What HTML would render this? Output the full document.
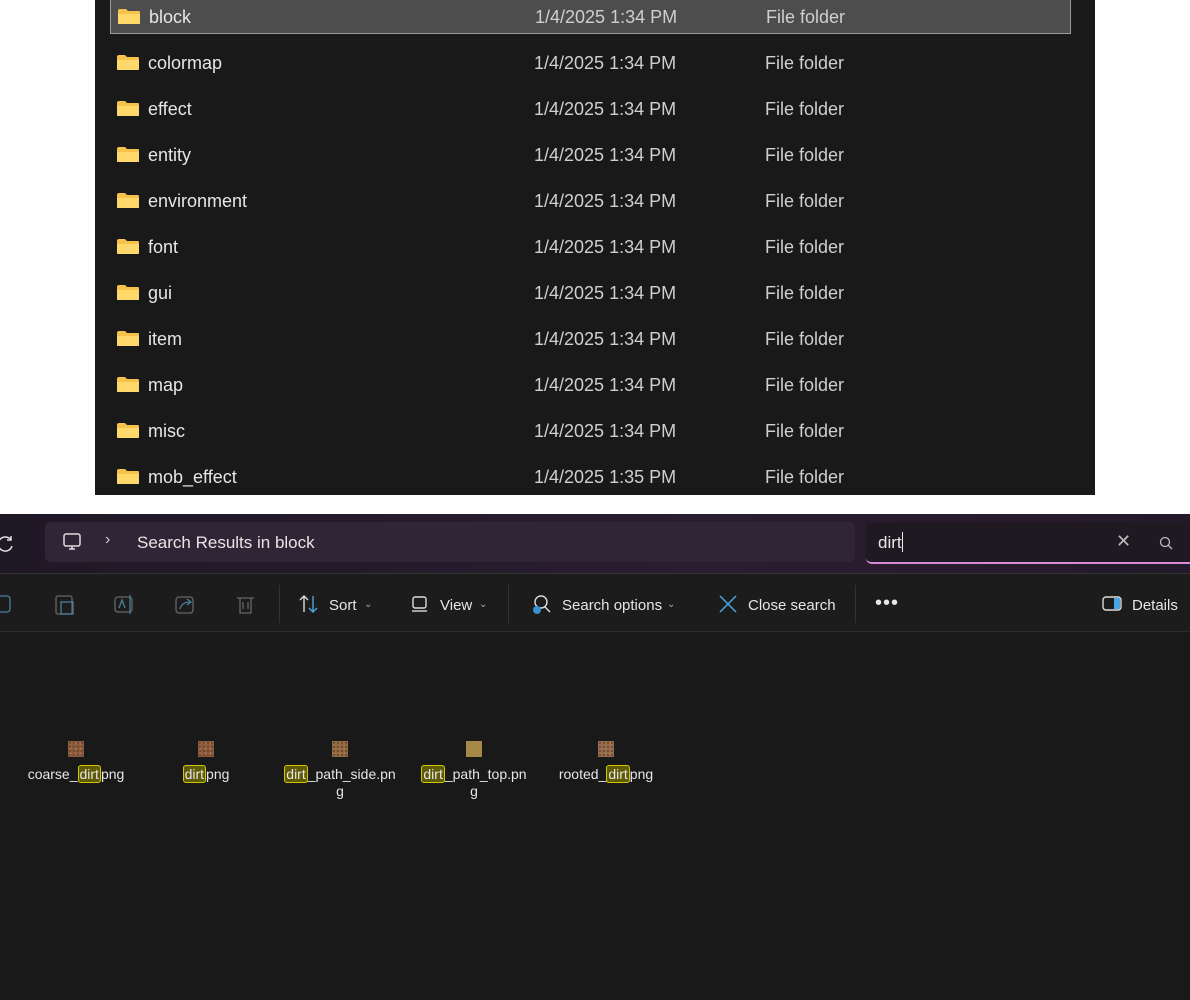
<!DOCTYPE html>
<html><head><meta charset="utf-8"><style>
*{margin:0;padding:0;box-sizing:border-box}
body{width:1190px;height:1000px;background:#fff;position:relative;overflow:hidden;font-family:"Liberation Sans",sans-serif;color:#e6e6e6}
#top{position:absolute;left:95px;top:0;width:1000px;height:495px;background:#191919}
.row{position:absolute;left:15px;width:961px;height:36px;font-size:18px}
.row .ic{position:absolute;left:6px;top:10px;width:24px;height:17px}
.row .n{position:absolute;left:38px;top:9px}
.row .d{position:absolute;left:424px;top:9px;color:#cfcfcf}
.row .t{position:absolute;left:655px;top:9px;color:#cfcfcf}
.sel{background:#4d4d4d;border:1px solid #9a9a9a;border-top:none}
#win{position:absolute;left:0;top:514px;width:1190px;height:486px;background:#191919}
#bar{position:absolute;left:0;top:0;width:1190px;height:59px;background:linear-gradient(90deg,#1f1825,#2a1d30 60%,#24192a)}
#addr{position:absolute;left:45px;top:8px;width:810px;height:40px;background:#302536;border-radius:6px}
#srch{position:absolute;left:866px;top:8px;width:330px;height:42px;background:#1f1a22;border-radius:6px;border-bottom:2px solid #d889d8}
#tb{position:absolute;left:0;top:59px;width:1190px;height:59px;background:#1c1c1c;border-top:1px solid #333;border-bottom:1px solid #2c2c2c;font-size:15px}
.tx{position:absolute;top:23px}
.sep{position:absolute;top:11px;width:1px;height:38px;background:#333}
.f{position:absolute;top:227px;text-align:center;font-size:14px;line-height:17px;width:120px}
.f .sq{width:16px;height:16px;margin:0 auto 9px;background:#8a5a3c;background-image:radial-gradient(#6b432b 30%,transparent 31%),radial-gradient(#a97454 30%,transparent 31%);background-size:4px 4px,5px 5px}
.h{background:#5f5a07;border:1px solid #d0c700;border-radius:3px;padding:0 1px}
</style></head><body>
<div id="top">
<svg width="0" height="0" style="position:absolute"><defs><g id="fd"><path d="M1 3 Q1 1 3 1 H9 L11 3 H22 Q23 3 23 5 V15 Q23 16 22 16 H2 Q1 16 1 15Z" fill="#f5c34c"/><path d="M1 6 H23 V15 Q23 16 22 16 H2 Q1 16 1 15Z" fill="#ffd86a"/></g></defs></svg>
<div class="row sel" style="top:-2px;height:36px"><svg class="ic" viewBox="0 0 24 17"><use href="#fd"/></svg><span class="n">block</span><span class="d">1/4/2025 1:34 PM</span><span class="t">File folder</span></div>
<div class="row" style="top:44px"><svg class="ic" viewBox="0 0 24 17"><use href="#fd"/></svg><span class="n">colormap</span><span class="d">1/4/2025 1:34 PM</span><span class="t">File folder</span></div>
<div class="row" style="top:90px"><svg class="ic" viewBox="0 0 24 17"><use href="#fd"/></svg><span class="n">effect</span><span class="d">1/4/2025 1:34 PM</span><span class="t">File folder</span></div>
<div class="row" style="top:136px"><svg class="ic" viewBox="0 0 24 17"><use href="#fd"/></svg><span class="n">entity</span><span class="d">1/4/2025 1:34 PM</span><span class="t">File folder</span></div>
<div class="row" style="top:182px"><svg class="ic" viewBox="0 0 24 17"><use href="#fd"/></svg><span class="n">environment</span><span class="d">1/4/2025 1:34 PM</span><span class="t">File folder</span></div>
<div class="row" style="top:228px"><svg class="ic" viewBox="0 0 24 17"><use href="#fd"/></svg><span class="n">font</span><span class="d">1/4/2025 1:34 PM</span><span class="t">File folder</span></div>
<div class="row" style="top:274px"><svg class="ic" viewBox="0 0 24 17"><use href="#fd"/></svg><span class="n">gui</span><span class="d">1/4/2025 1:34 PM</span><span class="t">File folder</span></div>
<div class="row" style="top:320px"><svg class="ic" viewBox="0 0 24 17"><use href="#fd"/></svg><span class="n">item</span><span class="d">1/4/2025 1:34 PM</span><span class="t">File folder</span></div>
<div class="row" style="top:366px"><svg class="ic" viewBox="0 0 24 17"><use href="#fd"/></svg><span class="n">map</span><span class="d">1/4/2025 1:34 PM</span><span class="t">File folder</span></div>
<div class="row" style="top:412px"><svg class="ic" viewBox="0 0 24 17"><use href="#fd"/></svg><span class="n">misc</span><span class="d">1/4/2025 1:34 PM</span><span class="t">File folder</span></div>
<div class="row" style="top:458px"><svg class="ic" viewBox="0 0 24 17"><use href="#fd"/></svg><span class="n">mob_effect</span><span class="d">1/4/2025 1:35 PM</span><span class="t">File folder</span></div>
</div>
<div id="win">
<div id="bar">
<svg style="position:absolute;left:-4px;top:20px" width="20" height="20" viewBox="0 0 20 20"><path d="M15 6 A7 7 0 1 0 16 12" fill="none" stroke="#ddd" stroke-width="1.5"/><path d="M15 2 V6 H11" fill="none" stroke="#ddd" stroke-width="1.5"/></svg>
<div id="addr">
<svg style="position:absolute;left:17px;top:10px" width="20" height="20" viewBox="0 0 20 20"><rect x="2" y="2" width="16" height="12" rx="2" fill="none" stroke="#ddd" stroke-width="1.5"/><path d="M7 17 H13 M10 14 V17" stroke="#ddd" stroke-width="1.5"/></svg>
<span style="position:absolute;left:60px;top:9px;font-size:16px;color:#ccc">›</span>
<span style="position:absolute;left:92px;top:11px;font-size:17px">Search Results in block</span>
</div>
<div id="srch"><span style="position:absolute;left:12px;top:10px;font-size:17px">dirt<span style="display:inline-block;width:1px;height:20px;background:#eee;vertical-align:-4px"></span></span>
<span style="position:absolute;left:250px;top:9px;font-size:18px;color:#bbb">✕</span>
<svg style="position:absolute;left:293px;top:14px" width="14" height="14" viewBox="0 0 14 14"><circle cx="6" cy="6" r="4.5" fill="none" stroke="#bbb" stroke-width="1.3"/><path d="M9 9 L13 13" stroke="#bbb" stroke-width="1.3"/></svg></div>
</div>
<div id="tb">
<svg style="position:absolute;left:0;top:19px" width="270" height="22" viewBox="0 0 270 22" fill="none" stroke-width="1.3"><rect x="-4" y="3" width="14" height="16" rx="3" stroke="#4a7f9a"/><rect x="56" y="3" width="16" height="18" rx="2" stroke="#666"/><rect x="61" y="9" width="12" height="12" stroke="#4a7f9a"/><rect x="115" y="4" width="17" height="15" rx="3" stroke="#666"/><path d="M119 15 L122 7 L125 15 M130 2 V21" stroke="#4a7f9a"/><rect x="176" y="4" width="17" height="16" rx="3" stroke="#666"/><path d="M180 16 Q182 9 190 9 M187 6 L191 9 L187 12" stroke="#4a7f9a"/><path d="M237 5 H254 M240 5 V20 H251 V5 M243 9 V16 M248 9 V16" stroke="#666"/></svg>
<div class="sep" style="left:279px"></div>
<svg style="position:absolute;left:298px;top:20px" width="22" height="20" viewBox="0 0 22 20" fill="none" stroke-width="1.4"><path d="M6 18 V2 M2 6 L6 2 L10 6" stroke="#ddd"/><path d="M15 2 V18 M11 14 L15 18 L19 14" stroke="#4aa6e0"/></svg>
<span class="tx" style="left:329px">Sort</span><span class="tx" style="left:364px;font-size:10px;top:25px;color:#aaa">⌄</span>
<svg style="position:absolute;left:410px;top:21px" width="20" height="18" viewBox="0 0 20 18" fill="none" stroke="#ddd" stroke-width="1.4"><rect x="3" y="2" width="13" height="11" rx="2"/><path d="M2 16 H17"/></svg>
<span class="tx" style="left:440px">View</span><span class="tx" style="left:479px;font-size:10px;top:25px;color:#aaa">⌄</span>
<div class="sep" style="left:508px"></div>
<svg style="position:absolute;left:530px;top:20px" width="22" height="22" viewBox="0 0 22 22" fill="none"><circle cx="11" cy="8" r="6" stroke="#ddd" stroke-width="1.4"/><path d="M15 13 L20 18" stroke="#ddd" stroke-width="1.4"/><circle cx="7" cy="16" r="4" fill="#3a8fd0"/></svg>
<span class="tx" style="left:562px">Search options</span><span class="tx" style="left:667px;font-size:10px;top:25px;color:#aaa">⌄</span>
<svg style="position:absolute;left:718px;top:20px" width="20" height="20" viewBox="0 0 20 20"><path d="M2 2 L18 18 M18 2 L2 18" stroke="#4aa6e0" stroke-width="1.5"/></svg>
<span class="tx" style="left:748px">Close search</span>
<div class="sep" style="left:855px"></div>
<span class="tx" style="left:875px;font-size:20px;top:18px;letter-spacing:1px">•••</span>
<svg style="position:absolute;left:1101px;top:21px" width="22" height="18" viewBox="0 0 22 18" fill="none" stroke-width="1.4"><rect x="2" y="2" width="18" height="13" rx="3" stroke="#ddd"/><rect x="13" y="3" width="6" height="11" fill="#4aa6e0" stroke="none"/></svg>
<span class="tx" style="left:1132px">Details</span>
</div>
<div class="f" style="left:16px"><div class="sq"></div>coarse_<span class="h">dirt</span>png</div>
<div class="f" style="left:146px"><div class="sq"></div><span class="h">dirt</span>png</div>
<div class="f" style="left:280px"><div class="sq" style="background-color:#8f6a42"></div><span class="h">dirt</span>_path_side.pn<br>g</div>
<div class="f" style="left:414px"><div class="sq" style="background:#a48a46"></div><span class="h">dirt</span>_path_top.pn<br>g</div>
<div class="f" style="left:546px"><div class="sq" style="background-color:#946a50"></div>rooted_<span class="h">dirt</span>png</div>
</div>
</body></html>
